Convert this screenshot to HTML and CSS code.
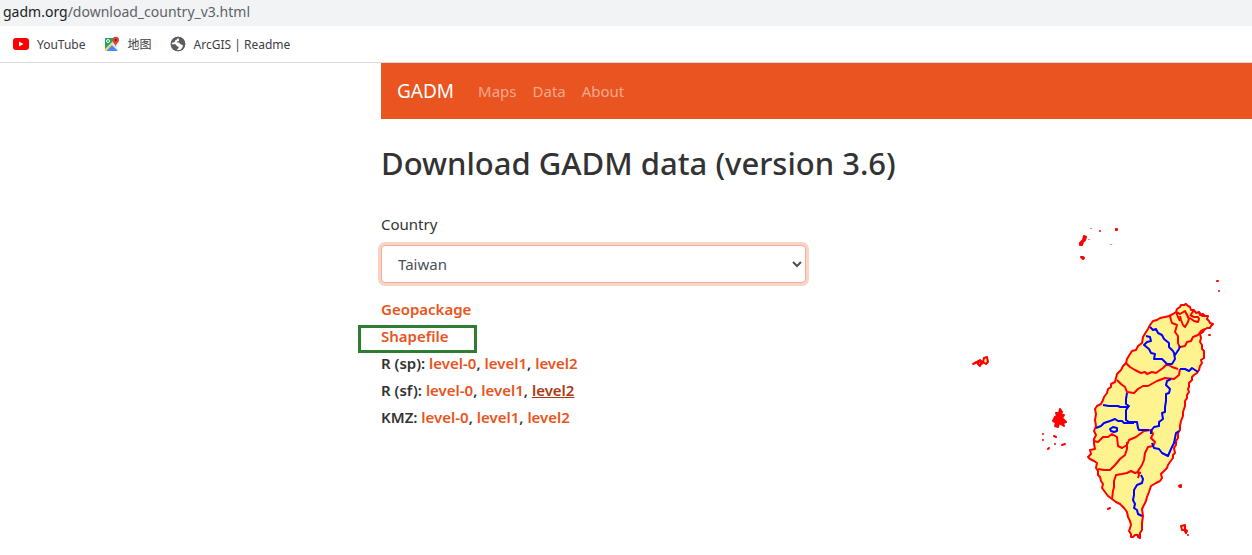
FILE: index.html
```html
<!DOCTYPE html>
<html lang="en">
<head>
    <meta charset="UTF-8">
    <meta name="viewport" content="width=device-width, initial-scale=1.0">
    <title>GADM</title>
    <link rel="stylesheet" href="styles.css">
</head>
<body>
    <header class="browser">
        <div class="address"><span class="host">gadm.org</span>/download_country_v3.html</div>
        <nav class="bookmarks">
            <a href="#">
                <svg width="16" height="16" viewBox="0 0 16 16">
                    <rect x="0" y="2" width="16" height="12" rx="3" fill="#f00"/>
                    <path d="M6 5.500L10.500 8L6 10.500Z" fill="#fff"/>
                </svg>
                YouTube
            </a>
            <a href="#">
                <svg width="16" height="16" viewBox="0 0 16 16">
                    <path d="M1 2h12v13H1z" fill="#1fa463"/>
                    <path d="M1 15L13 3v12z" fill="#e8eaed"/>
                    <path d="M2 15l6-6 6 6z" fill="#4a89f3"/>
                    <path d="M1 13L12 2h2L2 15H1z" fill="#fdd663"/>
                    <circle cx="4" cy="5" r="1.500" fill="none" stroke="#fff"/>
                    <path d="M11.500 11C11.500 8 8.500 7 8.500 4a3 3 0 0 1 6.500 0c0 3-3.500 4-3.500 7z" fill="#dc4437"/>
                    <circle cx="11.800" cy="4" r="1.200" fill="#7e241c"/>
                </svg>
                地图
            </a>
            <a href="#">
                <svg width="16" height="16" viewBox="0 0 16 16">
                    <circle cx="8" cy="8" r="7.300" fill="#5a5e63"/>
                    <path d="M8.500 2.200c-1.800.3-1.400 1.400-2.700 1.800-.8.300-.6 1.400-1.200 2-.5.500-2 .6-3 .8v1.500c1.500-.2 3.200-.3 4.200.3.800.5.500 1.500 1.500 1.700 1.300.2 1.500.8 1.200 1.600-.3.900-1.400.8-1.700 2 1.500.5 3.200.2 4.500-.7.200-1.300 1.500-1.700 1.600-3 .1-1.500-1.400-1.300-2.400-1.900-.9-.5-.9-1.500-2-1.700-1.100-.1-1.600.1-1.700-.5 0-.8 1.300-.5 2-1 .7-.6 0-1.900-.3-2.900z" fill="#fff"/>
                    <circle cx="8" cy="8" r="6.800" fill="none" stroke="#5a5e63"/>
                </svg>
                ArcGIS | Readme
            </a>
        </nav>
    </header>

    <div class="container">
        <nav class="navbar">
            <a class="brand" href="#">GADM</a>
            <a href="#">Maps</a>
            <a href="#">Data</a>
            <a href="#">About</a>
        </nav>

        <h1>Download GADM data (version 3.6)</h1>

        <div class="row">
            <div class="form">
                <label for="country">Country</label>
                <select id="country">
                    <option>Taiwan</option>
                </select>
                <ul class="downloads">
                    <li><a href="#">Geopackage</a></li>
                    <li class="marked"><a href="#">Shapefile</a></li>
                    <li>R (sp): <a href="#">level-0</a>, <a href="#">level1</a>, <a href="#">level2</a></li>
                    <li>R (sf): <a href="#">level-0</a>, <a href="#">level1</a>, <a class="hover" href="#">level2</a></li>
                    <li>KMZ: <a href="#">level-0</a>, <a href="#">level1</a>, <a href="#">level2</a></li>
                </ul>
            </div>

            <svg class="map" width="292" height="340" viewBox="960 211 292 340">
                <!-- main island -->
                <path class="land" d="M1176 312L1177 309L1180 307L1181 305L1184 305L1186 304L1188 306L1190 307L1191 310L1194 310L1196 313L1199 312L1200 315L1203 314L1205 316L1208 316L1207 319L1209 321L1210 323L1213 324L1211 326L1210 328L1207 328L1204 330L1203 332L1200 334L1201 338L1200 342L1202 345L1202 349L1204 351L1204 358L1201 360L1202 363L1200 366L1199 370L1197 373L1194 375L1192 377L1192 380L1189 383L1189 387L1188 389L1189 392L1187 395L1187 398L1185 401L1185 406L1183 412L1183 416L1181 421L1180 426L1180 430L1178 433L1178 438L1176 441L1176 445L1174 448L1175 453L1173 455L1173 458L1170 462L1168 465L1167 468L1164 471L1161 474L1162 478L1160 481L1156 483L1151 486L1149 492L1147 497L1146 501L1144 505L1142 509L1143 516L1142 523L1142 530L1140 533L1140 538L1138 537L1138 535L1135 535L1133 537L1131 537L1131 534L1129 531L1131 525L1130 521L1128 517L1127 512L1124 508L1120 504L1116 502L1112 499L1108 496L1105 492L1102 488L1103 484L1101 481L1100 477L1098 475L1098 471L1096 468L1097 463L1094 461L1090 459L1088 457L1091 454L1090 450L1095 449L1094 444L1094 439L1096 435L1094 431L1096 426L1095 420L1096 414L1095 409L1097 406L1101 404L1103 400L1104 397L1107 393L1108 389L1111 387L1111 384L1115 382L1116 378L1117 374L1121 370L1123 366L1126 363L1127 359L1130 354L1132 351L1136 350L1138 346L1142 343L1143 337L1146 332L1148 329L1150 325L1153 321L1157 320L1160 318L1165 317L1169 316L1173 314z"/>
                <!-- county borders -->
                <path class="red" d="M1170 316l1 4 1 3 5 2-2 7 3 4 0 7 2 5M1180 347l5-1 2-4 4-1 2-4 5-2 3-4 4-2M1176 312l2 5 2 4"/>
                <path class="red" d="M1176 312l4 2 5-3 2 4 2 3-1 4-3 5-2-2-2-5-1-4M1188 318l-1-4M1190 315l4 2 4 0 1 2-1 3-4-1-4-3M1194 310l-2 3-2 3M1199 312l3 4 6 0"/>
                <path class="red" d="M1126 363l4 4 5 3 6 3 4-1 2 2 5-2 4 1 7-5 4-4 5 3 6 2"/>
                <path class="red" d="M1117 380l4 4 4 3 2 5 7 1 4-4 5-3 5 0 9-5 8-3 9 1 5-4 1-6"/>
                <path class="red" d="M1094 441l4 1 5-5 5 0 4-3 5 3 1 9 4 2 5-3 2-5 7-3 8-6 7-1 2 4-2 4 4 4-2 4-5 1-3 6-1 7-2 5-4 6 1 4-1 3M1127 442l0 7-2 6-5 4-5 6-5 5-6 0-6-1M1112 499l1-8 1-4 0-6 2-6 6-1 5-1 4-2 4 2 3-1 3 1"/>
                <path class="blue" d="M1150 327l3 3 3-1 2 4 4 2 2 4 5 4 0 4 4 4 2 4 4-6 1-3M1146 336l4 1 1 4-4 1-3 3 5 4 2 4 4 1-1 5 8 0 5 5 5 0 3-5-1-6"/>
                <path class="blue" d="M1180 369l5 0 4 2 3-3 6 4M1171 379l-4 2-1 4 4 4-1 4-3 1 0 7-1 6 0 5-3 1 1 6-4 3 0 4-5 1-3 4 0 3"/>
                <path class="blue" d="M1103 405l6 1 9 0 2 1 8 0M1127 393l-1 6 0 5 3 2-3 4 0 10 3 2 8 0 1 6 1 2 10 0M1096 428l5-2 3-3 6-2 5-2 3 2 4 0 2 2 10 0"/>
                <path class="blue" d="M1110 429l3-2 4 1 0 3-3 1-3-1zM1152 443l2 5 5 1 3 4 6 3 3-7 3-6 1-5 1-5 3-2"/>
                <path class="blue" d="M1141 475l2 4-1 4-5 2-3 5 0 5-1 5 2 4-1 4 3 2 1 4 4 2"/>
                <!-- islands -->
                <path class="isle" d="M1084 236l2 1-1 3-2 2-1 3-2 0 0-2 3-3zM1081 257l2 0 1 1-1 1zM1116 229l1 0 0 1-1 0zM1217 281l1 0M1219 291l0 0M1209 335l1 0M1100 231l0 0"/>
                <path class="specks" d="M1091 228v1M1089 239v1M1111 244v1"/>
                <path class="isle" d="M973 364l3-2 2 1 2 2 3-2 -3-3-2 2z"/>
                <path class="land" d="M978 361l3 1-1 4-2-2zM984 358l3-1 1 5-2 2-3-2z"/>
                <path class="isle" d="M1060 409l2 3-1 3 3 0-2 3 4 4-3 1 1 3-5-3-1 4-3-1 1-3-3-2 2-4 2-1-1-3 3 0zM1043 434l0 0M1043 440l0 0M1054 436l2 1M1055 444l0 0M1048 449l1-1M1062 445l3-1M1108 509l2-1"/>
                <path class="land" d="M1179 486l2-1 0 2-1 0zM1181 526l4-1 0 4 2 2-1 2-2-3-2 0z"/>
                <path class="isle" d="M1188 535l0 0"/>
            </svg>
        </div>
    </div>
</body>
</html>
```

FILE: styles.css
```css
*,
*::after {
    box-sizing: border-box;
}
body {
    margin: 0;
    font-family: "Noto Sans", "Noto Sans CJK SC", sans-serif;
    font-size: 15px;
    line-height: 27px;
    color: #333;
    background-color: #fff;
}
a {
    color: #e95420;
    text-decoration: none;
}
svg {
    flex-shrink: 0;
}

/* browser bars */
.browser {
    border-bottom: 1px solid #dadce0;
}
.address {
    height: 26px;
    padding-left: 3px;
    font-size: 14px;
    line-height: 24px;
    color: #5f6368;
    background-color: #f1f3f4;
}
.host {
    color: #202124;
}
.bookmarks {
    display: flex;
    gap: 18px;
    height: 36px;
    padding-left: 13px;
}
.bookmarks a {
    display: flex;
    align-items: center;
    gap: 8px;
    font-size: 12px;
    color: #3c4043;
}

/* page */
.container {
    margin-left: 381px;
}
.navbar {
    display: flex;
    align-items: center;
    gap: 16px;
    height: 56px;
    padding: 0 16px;
    background-color: #e95420;
}
.navbar a {
    color: rgba(255, 255, 255, 0.5);
}
.navbar .brand {
    margin-right: 8px;
    font-size: 19px;
    color: #fff;
}
h1 {
    margin: 24px 0 28px;
    font-size: 31px;
    font-weight: 500;
    line-height: 40px;
}
.row {
    display: flex;
    align-items: flex-start;
    justify-content: space-between;
}
.form {
    flex: 0 0 425px;
}
.form label {
    display: block;
    margin-bottom: 7px;
}
.form select {
    display: block;
    width: 100%;
    height: 38px;
    padding: 0 0 0 12px;
    font: inherit;
    color: #495057;
    background-color: #fff;
    border: 1px solid #f4ad94;
    border-radius: 4px;
    outline: none;
    box-shadow: 0 0 0 3px rgba(233, 84, 32, 0.25);
}
.downloads {
    margin: 13px 0 0;
    padding: 0;
    list-style: none;
    font-weight: 600;
}
.downloads li {
    position: relative;
}
.downloads .hover {
    color: #ac3911;
    text-decoration: underline;
}
/* green frame round the shapefile link */
.marked::after {
    content: "";
    position: absolute;
    top: 2px;
    left: -23px;
    width: 119px;
    height: 28px;
    border: 3px solid #2e7d32;
}

/* map */
.map path {
    fill: none;
    stroke: #f00;
    stroke-width: 2;
    stroke-linejoin: round;
}
.map .land {
    fill: #fff38f;
}
.map .blue {
    stroke: #00f;
}
.map .isle {
    fill: #f00;
    stroke-linecap: round;
}
.map .specks {
    stroke-width: 1;
}
```
